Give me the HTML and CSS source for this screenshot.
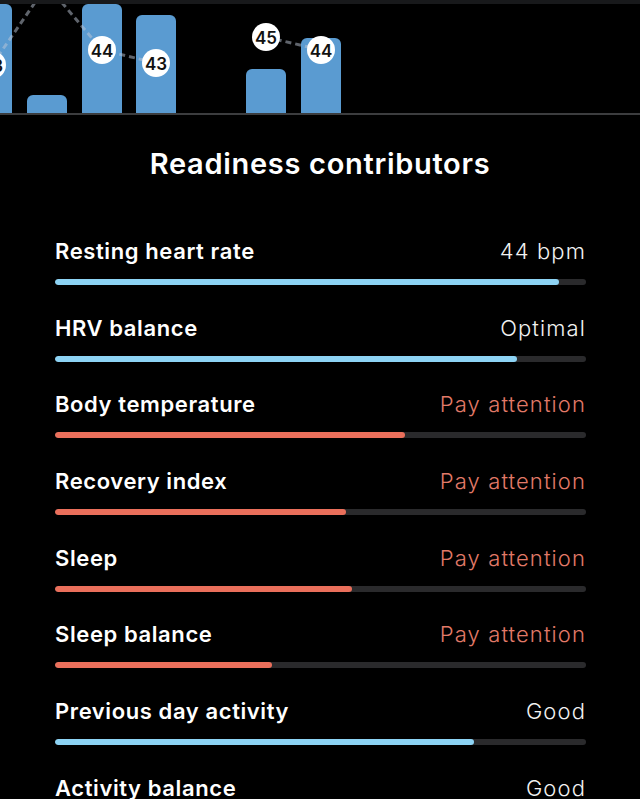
FILE: index.html
```html
<!DOCTYPE html>
<html lang="en">
<head>
    <meta charset="UTF-8">
    <title>Readiness</title>
    <link rel="stylesheet" href="styles.css">
</head>
<body>
    <div class="topbar"></div>

    <div class="chart">
        <div class="bars">
            <div class="col"><div class="bar" style="height:109px"></div></div>
            <div class="col"><div class="bar" style="height:18px"></div></div>
            <div class="col"><div class="bar" style="height:109px"></div></div>
            <div class="col"><div class="bar" style="height:98px"></div></div>
            <div class="col"></div>
            <div class="col"><div class="bar" style="height:44px"></div></div>
            <div class="col"><div class="bar" style="height:75px"></div></div>
        </div>
        <svg class="trend" width="640" height="109" viewBox="0 0 640 109">
            <polyline points="-8,61 47,-19 102,46 156,59" />
            <polyline points="266,33 321,46" />
            <g class="dot"><circle cx="-8" cy="61" r="14"/><text x="-8" y="62">43</text></g>
            <g class="dot"><circle cx="102" cy="46" r="14"/><text x="102" y="47">44</text></g>
            <g class="dot"><circle cx="156" cy="59" r="14"/><text x="156" y="60">43</text></g>
            <g class="dot"><circle cx="266" cy="33" r="14"/><text x="266" y="34">45</text></g>
            <g class="dot"><circle cx="321" cy="46" r="14"/><text x="321" y="47">44</text></g>
        </svg>
    </div>

    <h2 class="title">Readiness contributors</h2>

    <div class="list">
        <div class="row">
            <div class="head"><span class="label">Resting heart rate</span><span class="value">44 bpm</span></div>
            <div class="track"><div class="fill" style="width:94.9%"></div></div>
        </div>
        <div class="row">
            <div class="head"><span class="label">HRV balance</span><span class="value">Optimal</span></div>
            <div class="track"><div class="fill" style="width:87%"></div></div>
        </div>
        <div class="row warn">
            <div class="head"><span class="label">Body temperature</span><span class="value">Pay attention</span></div>
            <div class="track"><div class="fill" style="width:65.9%"></div></div>
        </div>
        <div class="row warn">
            <div class="head"><span class="label">Recovery index</span><span class="value">Pay attention</span></div>
            <div class="track"><div class="fill" style="width:54.8%"></div></div>
        </div>
        <div class="row warn">
            <div class="head"><span class="label">Sleep</span><span class="value">Pay attention</span></div>
            <div class="track"><div class="fill" style="width:55.9%"></div></div>
        </div>
        <div class="row warn">
            <div class="head"><span class="label">Sleep balance</span><span class="value">Pay attention</span></div>
            <div class="track"><div class="fill" style="width:40.9%"></div></div>
        </div>
        <div class="row">
            <div class="head"><span class="label">Previous day activity</span><span class="value">Good</span></div>
            <div class="track"><div class="fill" style="width:78.9%"></div></div>
        </div>
        <div class="row">
            <div class="head"><span class="label">Activity balance</span><span class="value">Good</span></div>
            <div class="track"><div class="fill" style="width:82%"></div></div>
        </div>
    </div>
</body>
</html>
```

FILE: styles.css
```css
body{
    margin: 0;
    background-color: #000;
    color: #fff;
    font-family: Inter, "Noto Sans", sans-serif;
    overflow: hidden;
}

.topbar{
    height: 4px;
    background-color: #18191b;
}

.chart{
    position: relative;
    height: 109px;
    overflow: hidden;
    border-bottom: 2px solid #3c3d3f;
}

.bars{
    display: flex;
    align-items: flex-end;
    gap: 14.75px;
    height: 100%;
    margin-left: -28px;
}

.col{
    width: 40px;
    height: 100%;
    display: flex;
    align-items: flex-end;
}

.bar{
    width: 100%;
    background-color: #5a9bd1;
    border-radius: 6px 6px 0 0;
}

.trend{
    position: absolute;
    top: 0;
    left: 0;
}

.trend polyline{
    fill: none;
    stroke: rgba(190, 200, 215, 0.5);
    stroke-width: 3;
    stroke-dasharray: 6 4;
}

.dot circle{
    fill: #fff;
}

.dot text{
    font-family: Inter, sans-serif;
    font-size: 17px;
    font-weight: 600;
    fill: #111;
    text-anchor: middle;
    dominant-baseline: central;
}

.title{
    margin: 33px 0 0;
    font-size: 29px;
    line-height: 32px;
    font-weight: 600;
    letter-spacing: 0.7px;
    text-align: center;
}

.list{
    padding: 57px 54px 0 55px;
}

.row{
    padding-bottom: 28.67px;
}

.head{
    display: flex;
    justify-content: space-between;
    font-size: 22px;
    line-height: 28px;
}

.label{
    font-weight: 600;
    letter-spacing: 0.6px;
}

.value{
    font-weight: 300;
    letter-spacing: 1.1px;
    color: #f2f2f2;
}

.track{
    margin-top: 14px;
    height: 6px;
    border-radius: 3px;
    background-color: #2a2a2c;
    overflow: hidden;
}

.fill{
    height: 100%;
    border-radius: 3px;
    background-color: #8dd3f4;
}

.warn .value{
    color: #e27a68;
}

.warn .fill{
    background-color: #ea6f5b;
}
```
